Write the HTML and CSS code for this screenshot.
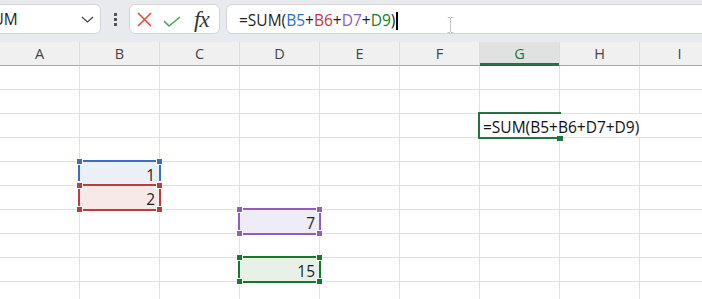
FILE: index.html
```html
<!DOCTYPE html>
<html lang="en">
<head>
  <meta charset="UTF-8" />
  <title>Sheet - SUM formula</title>
  <meta name="viewport" content="width=device-width, initial-scale=1.0" />
  <link rel="stylesheet" href="styles.css">
</head>
<body>

  <!-- Formula bar -->
  <div class="topbar">
    <div class="namebox">
      <span>SUM</span>
      <svg width="13" height="7" viewBox="0 0 13 7"><polyline points="1,1 6.5,6 12,1" fill="none" stroke="#444" stroke-width="1.2"/></svg>
    </div>
    <div class="dots"><i></i><i></i><i></i></div>
    <div class="fxbox">
      <svg class="ico-x" width="15" height="15" viewBox="0 0 15 15"><path d="M1 1L14 14M14 1L1 14" stroke="#e5463d" stroke-width="1.5" fill="none"/></svg>
      <svg class="ico-ok" width="18" height="11" viewBox="0 0 18 11"><polyline points="1,5 6,10 17,1" fill="none" stroke="#3fa85a" stroke-width="1.5"/></svg>
      <span class="fx">fx</span>
    </div>
    <div class="formula">
      =SUM(<span class="c-blue">B5</span>+<span class="c-red">B6</span>+<span class="c-purple">D7</span>+<span class="c-green">D9</span>)<span class="caret"></span>
      <svg class="ibeam" width="7" height="16" viewBox="0 0 7 16"><path d="M0.5 0.5h2.5M4 0.5h2.5M3.5 1v14M0.5 15.5h2.5M4 15.5h2.5" stroke="#c4c4c4" stroke-width="1" fill="none"/></svg>
    </div>
  </div>

  <!-- Grid -->
  <div class="sheet">
    <div class="hd">A</div><div class="hd">B</div><div class="hd">C</div><div class="hd">D</div><div class="hd">E</div><div class="hd">F</div><div class="hd sel">G</div><div class="hd">H</div><div class="hd">I</div>

    <!-- row 1 -->
    <div class="cell"></div><div class="cell"></div><div class="cell"></div><div class="cell"></div><div class="cell"></div><div class="cell"></div><div class="cell"></div><div class="cell"></div><div class="cell"></div>
    <!-- row 2 -->
    <div class="cell"></div><div class="cell"></div><div class="cell"></div><div class="cell"></div><div class="cell"></div><div class="cell"></div><div class="cell"></div><div class="cell"></div><div class="cell"></div>
    <!-- row 3 -->
    <div class="cell"></div><div class="cell"></div><div class="cell"></div><div class="cell"></div><div class="cell"></div><div class="cell"></div>
    <div class="cell ref">
      <div class="frame f-active">
        <div class="editor">=SUM(B5+B6+D7+D9)</div>
        <i class="fill-handle"></i>
      </div>
    </div>
    <div class="cell"></div><div class="cell"></div>
    <!-- row 4 -->
    <div class="cell"></div><div class="cell"></div><div class="cell"></div><div class="cell"></div><div class="cell"></div><div class="cell"></div><div class="cell"></div><div class="cell"></div><div class="cell"></div>
    <!-- row 5 -->
    <div class="cell"></div>
    <div class="cell ref bg-blue">1
      <div class="frame f-blue"><i class="h tl"></i><i class="h tr"></i><i class="h bl"></i><i class="h br"></i></div>
    </div>
    <div class="cell"></div><div class="cell"></div><div class="cell"></div><div class="cell"></div><div class="cell"></div><div class="cell"></div><div class="cell"></div>
    <!-- row 6 -->
    <div class="cell"></div>
    <div class="cell ref bg-red">2
      <div class="frame f-red"><i class="h tl"></i><i class="h tr"></i><i class="h bl"></i><i class="h br"></i></div>
    </div>
    <div class="cell"></div><div class="cell"></div><div class="cell"></div><div class="cell"></div><div class="cell"></div><div class="cell"></div><div class="cell"></div>
    <!-- row 7 -->
    <div class="cell"></div><div class="cell"></div><div class="cell"></div>
    <div class="cell ref bg-purple">7
      <div class="frame f-purple"><i class="h tl"></i><i class="h tr"></i><i class="h bl"></i><i class="h br"></i></div>
    </div>
    <div class="cell"></div><div class="cell"></div><div class="cell"></div><div class="cell"></div><div class="cell"></div>
    <!-- row 8 -->
    <div class="cell"></div><div class="cell"></div><div class="cell"></div><div class="cell"></div><div class="cell"></div><div class="cell"></div><div class="cell"></div><div class="cell"></div><div class="cell"></div>
    <!-- row 9 -->
    <div class="cell"></div><div class="cell"></div><div class="cell"></div>
    <div class="cell ref bg-green">15
      <div class="frame f-green"><i class="h tl"></i><i class="h tr"></i><i class="h bl"></i><i class="h br"></i></div>
    </div>
    <div class="cell"></div><div class="cell"></div><div class="cell"></div><div class="cell"></div><div class="cell"></div>
    <!-- row 10 -->
    <div class="cell"></div><div class="cell"></div><div class="cell"></div><div class="cell"></div><div class="cell"></div><div class="cell"></div><div class="cell"></div><div class="cell"></div><div class="cell"></div>
  </div>

</body>
</html>
```

FILE: styles.css
```css
* {
  box-sizing: border-box;
}

body {
  margin: 0;
  width: 702px;
  height: 299px;
  overflow: hidden;
  background: #fff;
  font-family: "Open Sans", "Noto Sans", sans-serif;
  color: #1f1f1f;
}

/* Formula bar */
.topbar {
  display: flex;
  align-items: flex-start;
  height: 42px;
  padding-top: 4px;
  background: #e8eaed;
  overflow: hidden;
}

.namebox {
  flex: none;
  width: 131px;
  height: 30px;
  margin-left: -30px;
  padding: 0 6px 0 13px;
  display: flex;
  align-items: center;
  justify-content: space-between;
  background: #fff;
  border: 1px solid #d3d5d9;
  border-radius: 6px;
  font-size: 15.5px;
}

.dots {
  flex: none;
  display: flex;
  flex-direction: column;
  gap: 2px;
  margin: 9px 12px 0 13px;
}

.dots i {
  display: block;
  width: 3px;
  height: 3px;
  background: #555;
}

.fxbox {
  flex: none;
  width: 91px;
  height: 30px;
  padding-left: 7px;
  display: flex;
  align-items: center;
  background: #fff;
  border: 1px solid #d3d5d9;
  border-radius: 6px;
}

.ico-x {
  margin-top: 1px;
}

.ico-ok {
  margin: 5px 0 0 11px;
}

.fx {
  margin-left: 13px;
  font-family: "Liberation Serif", serif;
  font-style: italic;
  font-size: 23px;
  line-height: 1;
  color: #333;
  letter-spacing: -1px;
}

.formula {
  flex: none;
  position: relative;
  width: 500px;
  height: 30px;
  margin-left: 6px;
  padding: 3px 0 0 12px;
  background: #fff;
  border: 1px solid #d3d5d9;
  border-radius: 6px;
  font-size: 15.5px;
  line-height: 25px;
  white-space: nowrap;
}

.c-blue { color: #2f6fc9; }
.c-red { color: #c8363c; }
.c-purple { color: #8a5cc2; }
.c-green { color: #107c2a; }

.caret {
  display: inline-block;
  width: 2px;
  height: 18px;
  margin-left: 1px;
  background: #000;
  vertical-align: -4px;
}

.ibeam {
  position: absolute;
  left: 220px;
  top: 12px;
}

/* Grid */
.sheet {
  display: grid;
  grid-template-columns: repeat(9, 80px);
  grid-auto-rows: 24px;
  width: 720px;
}

.hd {
  background: #f0f0f0;
  border-right: 1px solid #dcdcdc;
  border-bottom: 1px solid #a9a9a9;
  text-align: center;
  font-size: 14.5px;
  line-height: 23px;
  color: #444;
}

.hd.sel {
  background: #e1e1e1;
  color: #217346;
  border-bottom-color: #217346;
  box-shadow: inset 0 -2px 0 #217346;
}

.cell {
  border-right: 1px solid #e1e1e1;
  border-bottom: 1px solid #e1e1e1;
  padding: 2px 4px 0;
  text-align: right;
  font-size: 15.5px;
  line-height: 22px;
}

.ref {
  position: relative;
}

.bg-blue { background: #eaeff8; }
.bg-red { background: #f8e9e9; }
.bg-purple { background: #f0ecf7; }
.bg-green { background: #e7f1e8; }

.frame {
  position: absolute;
  top: -2px;
  left: -2px;
  right: -2px;
  bottom: -2px;
  border: 2px solid;
  z-index: 2;
}

.f-blue { border-color: #3a6cc8; bottom: -1px; }
.f-red { border-color: #c0393f; }
.f-purple { border-color: #8e5fc2; }
.f-green { border-color: #117a2c; }
.f-active { border-color: #217346; }

.h {
  position: absolute;
  width: 7px;
  height: 7px;
  border: 1px solid #fff;
  background: currentColor;
}

.f-blue .h { color: #3a6cc8; }
.f-red .h { color: #c0393f; }
.f-purple .h { color: #8e5fc2; }
.f-green .h { color: #117a2c; }

.h.tl { left: -4px; top: -4px; }
.h.tr { right: -4px; top: -4px; }
.h.bl { left: -4px; bottom: -4px; }
.h.br { right: -4px; bottom: -4px; }

.editor {
  position: absolute;
  left: 0;
  top: 0;
  width: 162px;
  height: 100%;
  padding: 2px 0 0 3px;
  background: #fff;
  text-align: left;
  font-size: 15.5px;
  line-height: 22px;
  white-space: nowrap;
  color: #111;
}

.fill-handle {
  position: absolute;
  right: -4px;
  bottom: -4px;
  width: 6px;
  height: 5px;
  background: #217346;
}
```
